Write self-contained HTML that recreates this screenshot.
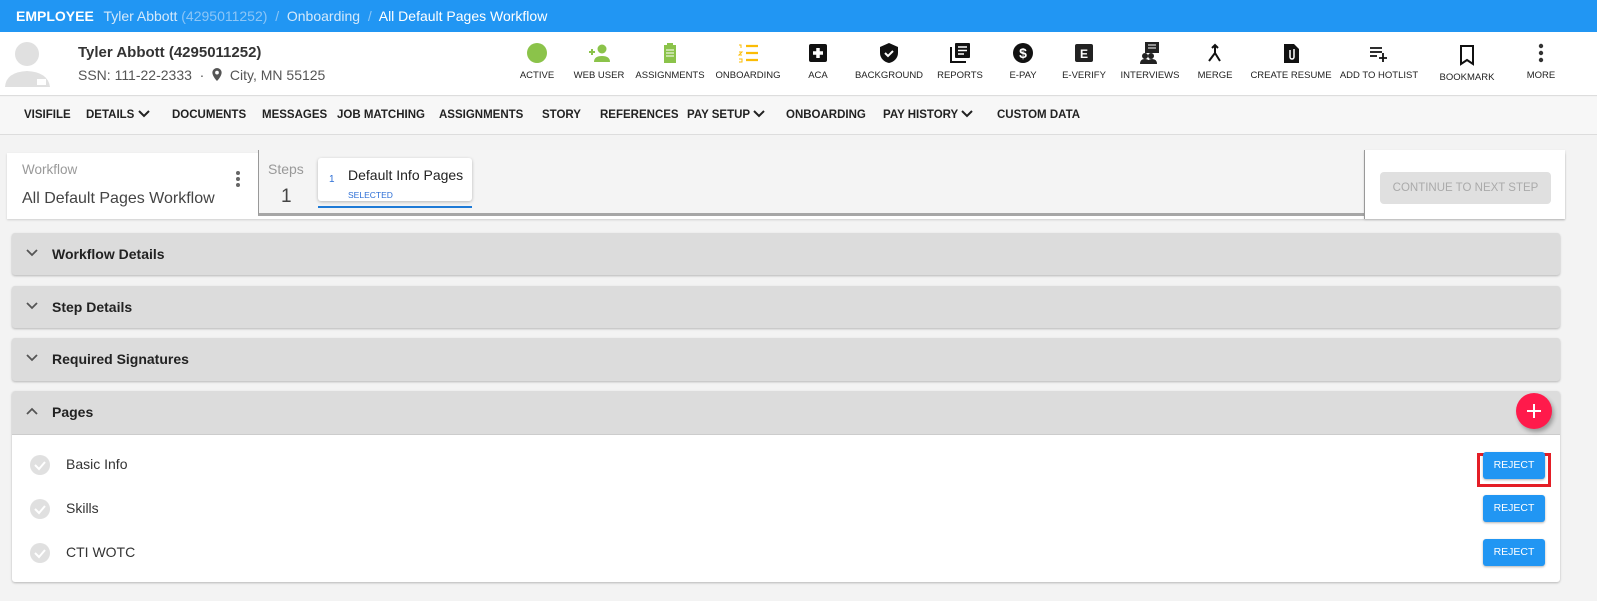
<!DOCTYPE html>
<html><head><meta charset="utf-8"><style>
*{box-sizing:border-box;margin:0;padding:0}
body{width:1597px;height:601px;overflow:hidden;background:#f3f3f3;font-family:"Liberation Sans",sans-serif;color:#222;position:relative}
.abs{position:absolute}
#top{left:0;top:0;width:1597px;height:32px;background:#2196f3;color:#fff;font-size:14px;line-height:32px;padding-left:16px;white-space:nowrap}
#top b{font-weight:bold;margin-right:6px}
#top .l{color:#d4e9fb}
#top .d{color:#8cc6f7}
#hdr{left:0;top:32px;width:1597px;height:64px;background:#fff;border-bottom:1px solid #ddd}
.it{position:absolute;top:10px;width:90px;margin-left:-45px;text-align:center;font-size:9.5px;color:#222;white-space:nowrap}
.it svg{display:block;margin:0 auto 6px;width:22px;height:22px}
#nav{left:0;top:97px;width:1597px;height:38px;background:#f7f7f7;border-bottom:1px solid #ddd;font-size:11.5px;font-weight:bold;color:#222}
#nav span{position:absolute;top:12px;white-space:nowrap}
.acc{position:absolute;left:12px;width:1548px;background:#dcdcdc;border-radius:3px;box-shadow:0 1px 2px rgba(0,0,0,.25);font-size:14px;font-weight:bold;color:#222}
.acc .t{position:absolute;left:40px;top:13px}
.acc svg{position:absolute;left:13px;top:15px}
.rj{position:absolute;left:1483px;width:62px;height:27px;background:#2196f3;color:#fff;border-radius:3px;font-size:10.5px;text-align:center;line-height:27px;box-shadow:0 1px 2px rgba(0,0,0,.3)}
.row{position:absolute;left:66px;font-size:14px;color:#333}
.ck{position:absolute;left:30px;width:20px;height:20px;border-radius:50%;background:#e0e0e0}
</style></head><body>
<div id="top" class="abs"><b>EMPLOYEE</b> <span class="l">Tyler Abbott</span> <span class="d">(4295011252)</span> <span class="d">&nbsp;/&nbsp;</span> <span class="l">Onboarding</span> <span class="d">&nbsp;/&nbsp;</span> All Default Pages Workflow</div>
<div id="hdr" class="abs">
 <svg class="abs" style="left:4px;top:8px" width="48" height="48" viewBox="0 0 48 48"><circle cx="23" cy="14" r="12" fill="#e0e0e0"/><path d="M1 47 Q2 32 23 31 Q44 32 46 47Z" fill="#e0e0e0"/><rect x="33" y="39" width="9" height="6" fill="#fff"/></svg>
 <div class="abs" style="left:78px;top:12px;font-size:15px;font-weight:bold;color:#333">Tyler Abbott (4295011252)</div>
 <div class="abs" style="left:78px;top:35px;font-size:14px;color:#555">SSN: 111-22-2333 &nbsp;·&nbsp; <svg width="10" height="13" viewBox="0 0 10 14" style="vertical-align:-1px"><path d="M5 0a5 5 0 0 0-5 5c0 4 5 9 5 9s5-5 5-9a5 5 0 0 0-5-5zm0 7a2 2 0 1 1 0-4 2 2 0 0 1 0 4z" fill="#555"/></svg>&nbsp; City, MN 55125</div>
 <div class="it" style="left:537px"><svg viewBox="0 0 22 22"><circle cx="11" cy="11" r="10" fill="#8bc34a"/></svg>ACTIVE</div>
 <div class="it" style="left:599px"><svg viewBox="0 0 22 22"><circle cx="14" cy="7" r="4.5" fill="#8bc34a"/><path d="M6 20q0-6 8-6t8 6z" fill="#8bc34a"/><path d="M1 10h6M4 7v6" stroke="#8bc34a" stroke-width="2"/></svg>WEB USER</div>
 <div class="it" style="left:670px"><svg viewBox="0 0 22 22"><rect x="5" y="3" width="12" height="18" fill="#8bc34a"/><rect x="8" y="1" width="6" height="3" fill="#8bc34a"/><path d="M7 8h8M7 11h8M7 14h8" stroke="#fff"/></svg>ASSIGNMENTS</div>
 <div class="it" style="left:748px"><svg viewBox="0 0 22 22"><path d="M9 4h12M9 11h12M9 18h12" stroke="#fbbc05" stroke-width="2.2"/><path d="M2 3h2v3M2 10h3l-3 3h3M2 17h3v3H2" stroke="#fbbc05" fill="none" stroke-width="1"/></svg>ONBOARDING</div>
 <div class="it" style="left:818px"><svg viewBox="0 0 22 22"><rect x="2" y="2" width="18" height="18" rx="2" fill="#111"/><path d="M11 6v10M6 11h10" stroke="#fff" stroke-width="3.5"/></svg>ACA</div>
 <div class="it" style="left:889px"><svg viewBox="0 0 22 22"><path d="M11 1l9 4v6c0 5-4 9-9 10-5-1-9-5-9-10V5z" fill="#111"/><path d="M7 11l3 3 5-5" stroke="#fff" stroke-width="2" fill="none"/></svg>BACKGROUND</div>
 <div class="it" style="left:960px"><svg viewBox="0 0 22 22"><path d="M2 5v15h15" stroke="#111" stroke-width="2" fill="none"/><rect x="6" y="1" width="15" height="15" rx="1" fill="#111"/><path d="M9 5h9M9 8.5h9M9 12h6" stroke="#fff" stroke-width="1.6"/></svg>REPORTS</div>
 <div class="it" style="left:1023px"><svg viewBox="0 0 22 22"><circle cx="11" cy="11" r="10" fill="#111"/><text x="11" y="16" font-size="14" font-weight="bold" fill="#fff" text-anchor="middle" font-family="Liberation Sans">$</text></svg>E-PAY</div>
 <div class="it" style="left:1084px"><svg viewBox="0 0 22 22"><rect x="2" y="2" width="18" height="18" rx="2" fill="#222"/><text x="11" y="16" font-size="12" font-weight="bold" fill="#fff" text-anchor="middle" font-family="Liberation Sans">E</text></svg>E-VERIFY</div>
 <div class="it" style="left:1150px"><svg viewBox="0 0 22 22"><rect x="6" y="0" width="14" height="11" fill="#222"/><path d="M9 3h8M9 6h8" stroke="#fff"/><circle cx="6" cy="14" r="3" fill="#222"/><circle cx="12" cy="14" r="3" fill="#222"/><path d="M1 22q0-5 5-5t5 5zM8 22q0-5 5-5t5 5z" fill="#222"/></svg>INTERVIEWS</div>
 <div class="it" style="left:1215px"><svg viewBox="0 0 22 22"><path d="M11 3v8l-6 8M11 11l5 8M8 6l3-3 3 3" stroke="#111" stroke-width="2" fill="none"/></svg>MERGE</div>
 <div class="it" style="left:1291px"><svg viewBox="0 0 22 22"><path d="M4 2h10l5 5v14H4z" fill="#111"/><path d="M10 8v7a2 2 0 0 0 4 0V7" stroke="#fff" stroke-width="1.5" fill="none"/></svg>CREATE RESUME</div>
 <div class="it" style="left:1379px"><svg viewBox="0 0 22 22"><path d="M2 6h12M2 10h12M2 14h7M15 11v9M11 16h8" stroke="#111" stroke-width="1.8"/></svg>ADD TO HOTLIST</div>
 <div class="it" style="left:1467px;top:12px"><svg viewBox="0 0 22 22"><path d="M5 2h12v18l-6-4-6 4z" stroke="#111" stroke-width="2" fill="none"/></svg>BOOKMARK</div>
 <div class="it" style="left:1541px"><svg viewBox="0 0 22 22"><circle cx="11" cy="4" r="2.2" fill="#333"/><circle cx="11" cy="11" r="2.2" fill="#333"/><circle cx="11" cy="18" r="2.2" fill="#333"/></svg>MORE</div>
</div>
<div id="nav" class="abs">
 <span style="left:24px">VISIFILE</span><span style="left:86px">DETAILS <svg width="12" height="8" viewBox="0 0 12 8"><path d="M1 1l5 5 5-5" stroke="#222" stroke-width="2" fill="none"/></svg></span>
 <span style="left:172px">DOCUMENTS</span><span style="left:262px">MESSAGES</span><span style="left:337px">JOB MATCHING</span><span style="left:439px">ASSIGNMENTS</span><span style="left:542px">STORY</span><span style="left:600px">REFERENCES</span>
 <span style="left:687px">PAY SETUP <svg width="12" height="8" viewBox="0 0 12 8"><path d="M1 1l5 5 5-5" stroke="#222" stroke-width="2" fill="none"/></svg></span>
 <span style="left:786px">ONBOARDING</span><span style="left:883px">PAY HISTORY <svg width="12" height="8" viewBox="0 0 12 8"><path d="M1 1l5 5 5-5" stroke="#222" stroke-width="2" fill="none"/></svg></span><span style="left:997px">CUSTOM DATA</span>
</div>
<div class="abs" style="left:7px;top:153px;width:1558px;height:66px;background:#fff;box-shadow:0 1px 2px rgba(0,0,0,.15)"></div>
<div class="abs" style="left:22px;top:162px;font-size:13.5px;color:#999">Workflow</div>
<div class="abs" style="left:22px;top:190px;font-size:16px;color:#444">All Default Pages Workflow</div>
<svg class="abs" style="left:234px;top:170px" width="8" height="18"><circle cx="4" cy="3" r="2" fill="#666"/><circle cx="4" cy="9" r="2" fill="#666"/><circle cx="4" cy="15" r="2" fill="#666"/></svg>
<div class="abs" style="left:258px;top:150px;width:1106px;height:66px;background:#f4f4f4;border-left:1px solid #999;border-bottom:3px solid #a6a6a6"></div>
<div class="abs" style="left:268px;top:161px;font-size:14px;color:#999">Steps</div>
<div class="abs" style="left:281px;top:186px;font-size:19px;color:#444">1</div>
<div class="abs" style="left:318px;top:158px;width:154px;height:43px;background:#fff;border-radius:3px;box-shadow:0 1px 3px rgba(0,0,0,.25)"></div>
<div class="abs" style="left:329px;top:174px;font-size:10px;color:#2d6fd6">1</div>
<div class="abs" style="left:348px;top:167px;font-size:14px;color:#222">Default Info Pages</div>
<div class="abs" style="left:348px;top:190px;font-size:8.5px;color:#2d6fd6">SELECTED</div>
<div class="abs" style="left:318px;top:206px;width:154px;height:2px;background:#1e7ad6"></div>
<div class="abs" style="left:1364px;top:150px;width:201px;height:69px;background:#fff;border-left:1px solid #999;box-shadow:0 1px 2px rgba(0,0,0,.15)"></div>
<div class="abs" style="left:1380px;top:172px;width:171px;height:32px;background:#e0e0e0;border-radius:4px;color:#aaa;font-size:11.5px;text-align:center;line-height:32px">CONTINUE TO NEXT STEP</div>
<div class="acc" style="top:233px;height:42px"><svg width="14" height="10" viewBox="0 0 14 10"><path d="M2 2l5 5 5-5" stroke="#555" stroke-width="1.8" fill="none"/></svg><span class="t">Workflow Details</span></div>
<div class="acc" style="top:286px;height:42px"><svg width="14" height="10" viewBox="0 0 14 10"><path d="M2 2l5 5 5-5" stroke="#555" stroke-width="1.8" fill="none"/></svg><span class="t">Step Details</span></div>
<div class="acc" style="top:338px;height:43px"><svg width="14" height="10" viewBox="0 0 14 10"><path d="M2 2l5 5 5-5" stroke="#555" stroke-width="1.8" fill="none"/></svg><span class="t">Required Signatures</span></div>
<div class="acc" style="top:391px;height:191px;background:#fff"></div>
<div class="acc" style="top:391px;height:44px;box-shadow:none;border-bottom:1px solid #ccc;border-radius:3px 3px 0 0"><svg width="14" height="10" viewBox="0 0 14 10"><path d="M2 8l5-5 5 5" stroke="#555" stroke-width="1.8" fill="none"/></svg><span class="t">Pages</span></div>
<div class="abs" style="left:1516px;top:393px;width:36px;height:36px;border-radius:50%;background:#ff1a4b;box-shadow:2px 3px 4px rgba(0,0,0,.3)"><svg width="36" height="36"><path d="M18 11v14M11 18h14" stroke="#fff" stroke-width="2"/></svg></div>
<div class="ck" style="top:455px"><svg width="20" height="20"><path d="M5 10l4 4 6-7" stroke="#fff" stroke-width="2" fill="none"/></svg></div>
<div class="row" style="top:456px">Basic Info</div>
<div class="ck" style="top:499px"><svg width="20" height="20"><path d="M5 10l4 4 6-7" stroke="#fff" stroke-width="2" fill="none"/></svg></div>
<div class="row" style="top:500px">Skills</div>
<div class="ck" style="top:543px"><svg width="20" height="20"><path d="M5 10l4 4 6-7" stroke="#fff" stroke-width="2" fill="none"/></svg></div>
<div class="row" style="top:544px">CTI WOTC</div>
<div class="abs" style="left:1477px;top:453px;width:74px;height:34px;border:3px solid #e41e26"></div>
<div class="rj" style="top:452px">REJECT</div>
<div class="rj" style="top:495px">REJECT</div>
<div class="rj" style="top:539px">REJECT</div>
</body></html>
